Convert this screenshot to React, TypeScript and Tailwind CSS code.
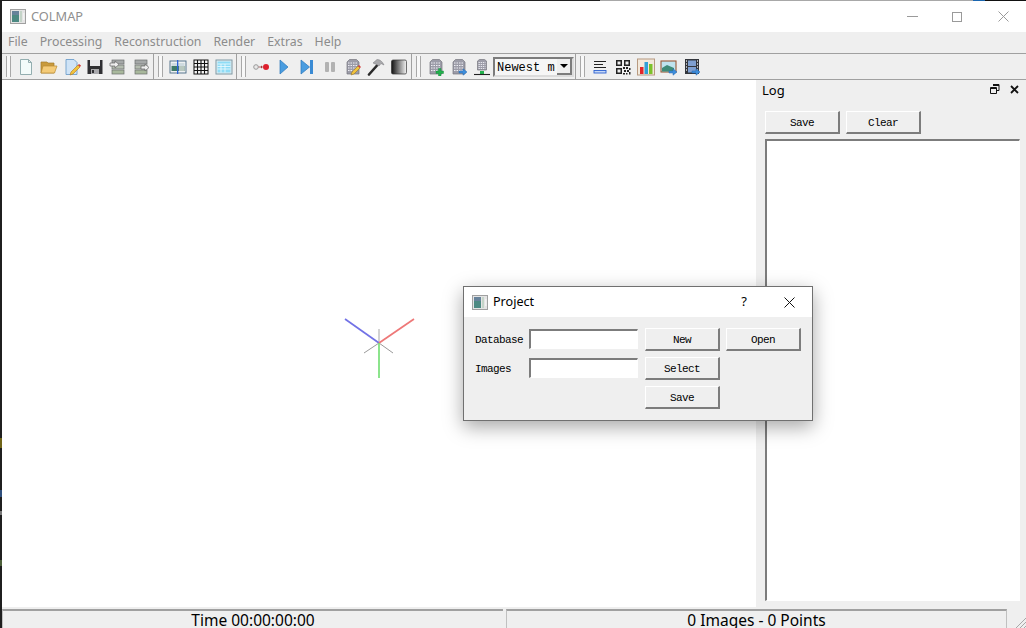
import { ReactNode } from "react";

const ui = "font-['Noto_Sans','Liberation_Sans',sans-serif]";
const mono = "font-['Liberation_Mono',monospace] text-[11px] tracking-[-0.6px]";

const Svg = ({ children, size = 18 }: { children: ReactNode; size?: number }) => (
  <svg width={size} height={size} viewBox="0 0 18 18" className="block">
    {children}
  </svg>
);

const Building = () => (
  <g>
    <path d="M3 4l2.500-2.500h7L15 4v12H3z" fill="#9c9ca8" stroke="#77777f" strokeWidth="0.7" />
    <path
      d="M4 5h10M4 7.500h10M4 10h10M4 12.500h10"
      stroke="#eeeef4"
      strokeWidth="1"
      strokeDasharray="1.500 1"
    />
  </g>
);

const BlueArrow = () => (
  <path d="M9 13h4v-2.200l4 3.200-4 3.200V15H9z" fill="#3f8fdc" stroke="#2267b0" strokeWidth="0.5" />
);

const Stack = ({ right }: { right?: boolean }) => (
  <g>
    <rect x="3" y="2" width="12" height="4" fill="#a5a8a8" stroke="#6b6e6e" strokeWidth="0.7" />
    <rect x="3" y="7" width="12" height="4" fill="#b4bcb0" stroke="#6b6e6e" strokeWidth="0.7" />
    <rect x="3" y="12" width="12" height="4" fill="#a8b89c" stroke="#6b6e6e" strokeWidth="0.7" />
    {right ? (
      <path d="M9 8h4V6l4 3.500L13 13v-2H9z" fill="#eee" stroke="#666" strokeWidth="0.7" />
    ) : (
      <path d="M1 5h5V3l4 3.500L6 10V8H1z" fill="#eee" stroke="#666" strokeWidth="0.7" />
    )}
  </g>
);

const icons: { [key: string]: ReactNode } = {
  newFile: (
    <path d="M3.500 1.500h8l3 3v12h-11z M11.500 1.500v3h3" fill="#f3fbfa" stroke="#88a6a8" strokeWidth="0.9" />
  ),
  open: (
    <g>
      <path d="M1 4h6l1 1h6v10H1z" fill="#c99a3c" stroke="#a57b2a" strokeWidth="0.7" />
      <path d="M1 15l2-7h14l-2.500 7z" fill="#f4cb78" stroke="#b98b32" strokeWidth="0.7" />
    </g>
  ),
  edit: (
    <g>
      <path d="M3 1.500h8l3 3v12H3z" fill="#cfe3f6" stroke="#6f9fcc" strokeWidth="0.9" />
      <path d="M8 14l7-7 2 2-7 7-3 1z" fill="#f1c33c" stroke="#b0761c" strokeWidth="0.6" />
      <path d="M15 7l2 2 1-1.500-2-1.500z" fill="#d63c3c" />
    </g>
  ),
  save: (
    <g>
      <path d="M1.500 2h15v14h-15z" fill="#2f2f33" />
      <rect x="4" y="2" width="10" height="6" fill="#e8e8ec" />
      <rect x="5" y="11" width="8" height="5" fill="#a8a8ac" />
      <rect x="6" y="12" width="2" height="3" fill="#2f2f33" />
    </g>
  ),
  dbIn: <Stack />,
  dbOut: <Stack right />,
  split: (
    <g>
      <rect x="1" y="3" width="16" height="12" fill="#eef1f2" stroke="#4a6a85" strokeWidth="0.9" />
      <rect x="2.500" y="5" width="13" height="3" fill="#cfdbe0" />
      <rect x="2.500" y="8" width="13" height="5" fill="#3f7a68" />
      <rect x="10" y="8" width="5.500" height="5" fill="#b9c8c0" />
      <rect x="8" y="2" width="1.300" height="14" fill="#2a62d8" />
    </g>
  ),
  grid: (
    <g>
      <rect x="2" y="2" width="14" height="14" fill="#f7f7f7" stroke="#111" />
      <path d="M5.500 2v14M9 2v14M12.500 2v14M2 5.500h14M2 9h14M2 12.500h14" stroke="#111" strokeWidth="1.100" />
    </g>
  ),
  table: (
    <g>
      <rect x="1" y="2" width="16" height="14" fill="#e2eef2" stroke="#7e9aa5" />
      <rect x="2.500" y="3.500" width="13" height="11" fill="#8fdcf6" />
      <path d="M2.500 6h13M2.500 8.500h13M2.500 11h13M6 6v8.500M10 6v8.500" stroke="#f0fbff" strokeWidth="0.8" />
    </g>
  ),
  step: (
    <g>
      <circle cx="4" cy="9" r="2.300" fill="#e8e8e8" stroke="#999" />
      <path d="M6.500 9h3" stroke="#aa6666" />
      <path d="M9 7.500l2 1.500-2 1.500z" fill="#aa3333" />
      <circle cx="14" cy="9" r="3" fill="#dd1f2c" />
    </g>
  ),
  play: <path d="M5 2l8 7-8 7z" fill="#4a9de0" stroke="#2a76ba" strokeWidth="0.7" />,
  next: (
    <g>
      <path d="M3 2l8.500 7L3 16z" fill="#4a9de0" stroke="#2a76ba" strokeWidth="0.7" />
      <rect x="12" y="2" width="3" height="14" fill="#3a8bd4" />
    </g>
  ),
  pause: (
    <g>
      <rect x="4" y="4" width="4" height="10" rx="1" fill="#b2b2b2" />
      <rect x="10" y="4" width="4" height="10" rx="1" fill="#b2b2b2" />
    </g>
  ),
  buildEdit: (
    <g>
      <Building />
      <path d="M8 14l6-6 2 2-6 6-3 1z" fill="#f1c33c" stroke="#8a6a20" strokeWidth="0.5" />
      <path d="M14 8l2 2 1-1-2-2z" fill="#d63c3c" />
    </g>
  ),
  hammer: (
    <g>
      <path d="M2 16.500l8-9" stroke="#2a2a2a" strokeWidth="2.600" strokeLinecap="round" />
      <path d="M6 5l4-3.500c3 0 5.500 2 7 5.500l-3-1.500-2 2.500-2.500-1.500z" fill="#a9a9ac" stroke="#77777a" strokeWidth="0.5" />
    </g>
  ),
  gradient: (
    <rect x="1.500" y="2" width="15" height="14" rx="1.500" fill="url(#shade)" stroke="#333" strokeWidth="0.7" />
  ),
  buildAdd: (
    <g>
      <Building />
      <path d="M11.500 10.500h2.500v2.500h2.500v2.500H14V18h-2.500v-2.500H9V13h2.500z" fill="#22b14c" stroke="#128038" strokeWidth="0.4" />
    </g>
  ),
  buildOut: (
    <g>
      <Building />
      <BlueArrow />
    </g>
  ),
  buildNet: (
    <g>
      <path d="M4.500 3l2-1.500h5l2 1.500v9h-9z" fill="#9c9ca8" stroke="#77777f" strokeWidth="0.7" />
      <path d="M5.500 4.500h7M5.500 6.500h7M5.500 8.500h7M5.500 10.500h7" stroke="#eeeef4" strokeWidth="0.9" strokeDasharray="1.400 0.800" />
      <rect x="7" y="13" width="4" height="3" fill="#22b14c" />
      <path d="M1 16.500h16" stroke="#222" strokeWidth="1.100" />
    </g>
  ),
  lines: (
    <g>
      <path d="M3 3.500h12M3 6.500h9M3 9.500h12" stroke="#222" strokeWidth="1.100" />
      <rect x="3" y="12.500" width="12" height="2.500" fill="#c6d8f5" stroke="#2a5fd0" strokeWidth="0.9" />
    </g>
  ),
  qr: (
    <g fill="#222">
      <path d="M2 2h6v6H2z M3.500 3.500v3h3v-3z" fillRule="evenodd" />
      <path d="M10 2h6v6h-6z M11.500 3.500v3h3v-3z" fillRule="evenodd" />
      <path d="M2 10h6v6H2z M3.500 11.500v3h3v-3z" fillRule="evenodd" />
      <path d="M9 9h2v2H9zM12 9h2v2h-2zM15 10h1.500v2H15zM10 12h2v2h-2zM13 12h2v2h-2zM9 15h2v1.500H9zM12 15h1.500v1.500H12zM15 14h1.500v2.500H15z" />
    </g>
  ),
  chart: (
    <g>
      <rect x="0.500" y="1" width="17" height="16" fill="#f2e9dc" stroke="#b89a80" />
      <rect x="3" y="9" width="3.500" height="7" fill="#e2252b" />
      <rect x="7.500" y="4" width="3.500" height="12" fill="#2f9fd8" />
      <rect x="12" y="6" width="3.500" height="10" fill="#7cc22a" />
    </g>
  ),
  picture: (
    <g>
      <rect x="1" y="3" width="15" height="11" fill="#bfe3ee" stroke="#9a5a38" strokeWidth="1.100" />
      <path d="M2 10l5-3 7 3v3.400H2z" fill="#3f8b78" />
      <BlueArrow />
    </g>
  ),
  film: (
    <g>
      <rect x="2" y="1" width="14" height="15" fill="#33363c" />
      <rect x="5" y="2.500" width="8" height="5.500" fill="#7f9fd0" />
      <rect x="5" y="9" width="8" height="5.500" fill="#7f9fd0" />
      <path d="M3 3h1M3 6h1M3 9h1M3 12h1M14 3h1M14 6h1M14 9h1M14 12h1" stroke="#ddd" strokeWidth="1.500" />
      <BlueArrow />
    </g>
  ),
};

const ToolIcon = ({ name }: { name: string }) => (
  <div className="flex w-[23px] shrink-0 items-center justify-center">
    <Svg>{icons[name]}</Svg>
  </div>
);

const ToolGroup = ({ names, end, last }: { names: string[]; end?: ReactNode; last?: boolean }) => (
  <div className={`flex h-full shrink-0 items-center pl-1 pr-px ${last ? "" : "border-r border-[#a0a0a0]"}`}>
    <div className="mr-[3px] h-[21px] w-[5px] shrink-0 border-x border-[#a8a8a8] bg-[#f8f8f8]" />
    {names.map((name) => (
      <ToolIcon key={name} name={name} />
    ))}
    {end}
  </div>
);

const AppIcon = () => (
  <svg width="16" height="15" viewBox="0 0 16 15" className="block shrink-0">
    <rect x="0.500" y="0.500" width="15" height="14" fill="#e4e4e4" stroke="#a0a0a0" />
    <rect x="2" y="2" width="7" height="11" fill="#4d8a83" />
    <rect x="2" y="2" width="7" height="4" fill="#67839b" />
    <rect x="10" y="2" width="2" height="11" fill="#c4d4c8" />
    <rect x="13" y="4" width="1.500" height="7" fill="#f2f2f2" />
  </svg>
);

const QtButton = ({ label }: { label: string }) => (
  <button
    className={`flex h-[23px] w-[75px] shrink-0 items-center justify-center border-b-2 border-l border-r-2 border-t border-b-[#7c7c7c] border-l-white border-r-[#7c7c7c] border-t-white bg-[#efefef] pt-[2px] text-black ${mono}`}
  >
    {label}
  </button>
);

const QtInput = () => (
  <div className="mt-px h-[20px] w-[109px] self-start border-b border-l-2 border-r border-t-2 border-b-white border-l-[#7c7c7c] border-r-white border-t-[#7c7c7c] bg-white" />
);

const menus = ["File", "Processing", "Reconstruction", "Render", "Extras", "Help"];

const stripeMarks = [
  { top: "mt-[438px]", color: "bg-[#6f6418]", h: "h-[10px]" },
  { top: "mt-[42px]", color: "bg-[#2f4f7c]", h: "h-[7px]" },
  { top: "mt-[14px]", color: "bg-[#777777]", h: "h-[4px]" },
  { top: "mt-[45px]", color: "bg-[#4c5f3a]", h: "h-[6px]" },
];

const App = () => {
  return (
    <div className={`relative flex h-[628px] w-[1026px] overflow-hidden bg-white text-black ${ui}`}>
      <svg width="0" height="0" className="absolute">
        <defs>
          <linearGradient id="shade" x1="0" x2="1" y1="0" y2="0">
            <stop offset="0" stopColor="#111" />
            <stop offset="1" stopColor="#f4f4f4" />
          </linearGradient>
        </defs>
      </svg>

      {/* bit of the desktop showing at the left edge */}
      <div className="flex w-[2px] shrink-0 flex-col bg-[#1f1f1f]">
        {stripeMarks.map((mark) => (
          <div key={mark.top} className={`${mark.top} ${mark.h} ${mark.color}`} />
        ))}
      </div>

      <div className="flex min-w-0 flex-1 flex-col">
        <div className="flex h-px shrink-0">
          <div className="w-[598px] bg-[#1f1f1f]" />
          <div className="w-[373px] bg-[#a8a8a8]" />
          <div className="w-[12px] bg-[#1a66b0]" />
          <div className="flex-1 bg-[#111]" />
        </div>

        {/* title bar */}
        <div className="flex h-[31px] shrink-0 items-center bg-white pl-[8px]">
          <AppIcon />
          <span className="ml-[5px] text-[12.800px] text-[#8f8f8f]">COLMAP</span>
          <div className="ml-auto flex items-center">
            <div className="h-px w-[11px] bg-[#9a9a9a]" />
            <div className="ml-[34px] h-[10px] w-[10px] border border-[#9a9a9a]" />
            <svg width="11" height="11" viewBox="0 0 11 11" className="ml-[36px] mr-[17px]">
              <path d="M0.500 0.500l10 10M10.500 0.500l-10 10" stroke="#9a9a9a" />
            </svg>
          </div>
        </div>

        {/* menu bar */}
        <div className="flex h-[21px] shrink-0 items-center gap-[12px] bg-[#efefef] pl-[6px] text-[12.300px] text-[#8c8c8c]">
          {menus.map((menu) => (
            <span key={menu}>{menu}</span>
          ))}
        </div>

        {/* tool bar */}
        <div className="flex h-[27px] shrink-0 items-center border-y border-[#a0a0a0] bg-[#efefef]">
          <ToolGroup names={["newFile", "open", "edit", "save", "dbIn", "dbOut"]} />
          <ToolGroup names={["split", "grid", "table"]} />
          <ToolGroup names={["step", "play", "next", "pause", "buildEdit", "hammer", "gradient"]} />
          <ToolGroup
            names={["buildAdd", "buildOut", "buildNet"]}
            end={
              <div className="flex h-[20px] w-[81px] shrink-0 items-center overflow-hidden border-2 border-b-[#dcdcdc] border-l-[#7c7c7c] border-r-[#dcdcdc] border-t-[#7c7c7c] bg-[#f6f6f6] pl-[2px]">
                <span className="w-[58px] overflow-hidden whitespace-nowrap pt-[2px] font-['Liberation_Mono',monospace] text-[12px] leading-none">
                  Newest model
                </span>
                <div className="ml-auto flex h-[16px] w-[15px] items-center justify-center border-b-2 border-r-2 border-b-[#7c7c7c] border-r-[#7c7c7c] bg-[#efefef]">
                  <div className="h-0 w-0 border-x-[4px] border-t-[4px] border-x-transparent border-t-black" />
                </div>
              </div>
            }
          />
          <ToolGroup names={["lines", "qr", "chart", "picture", "film"]} last />
        </div>

        <div className="flex min-h-0 flex-1">
          {/* 3d view */}
          <div className="min-w-0 flex-1 bg-white">
            <svg width="754" height="527" viewBox="2 80 754 527" className="block">
              <path d="M379 329v14" stroke="#c4c4c4" strokeWidth="1.500" />
              <path d="M379 343l-15 10M379 343l14 10" stroke="#9a9a9a" strokeWidth="1" />
              <path d="M379 343l-34-24" stroke="#7272e6" strokeWidth="1.700" />
              <path d="M379 343l35-24" stroke="#ee7878" strokeWidth="1.700" />
              <path d="M379 343v35" stroke="#78e078" strokeWidth="1.700" />
            </svg>
          </div>

          {/* log dock */}
          <div className="flex w-[270px] shrink-0 flex-col bg-[#efefef] pb-[6px] pl-[9px] pr-[6px]">
            <div className="-ml-[3px] flex h-[22px] items-center pb-px text-[13px]">
              <span className="text-black">Log</span>
              <div className="ml-auto -mt-[3px] flex items-center gap-[10px] pr-[1px]">
                <svg width="10" height="10" viewBox="0 0 10 10">
                  <path d="M3 .5h6v6H7M.5 3.500h6v6h-6zM.5 4.500h6M3 1.500h6" fill="none" stroke="#111" />
                </svg>
                <svg width="9" height="9" viewBox="0 0 9 9">
                  <path d="M1 1l7 7M8 1l-7 7" stroke="#111" strokeWidth="1.800" />
                </svg>
              </div>
            </div>
            <div className="mt-[9px] flex gap-[6px]">
              <QtButton label="Save" />
              <QtButton label="Clear" />
            </div>
            <div className="mt-[5px] min-h-0 flex-1 border-b border-l-2 border-r border-t-2 border-b-white border-l-[#7c7c7c] border-r-white border-t-[#7c7c7c] bg-white" />
          </div>
        </div>

        {/* status bar */}
        <div className="flex h-[21px] shrink-0 bg-[#efefef] pt-[2px] text-[15.500px] leading-[19px]">
          <div className="flex h-[24px] w-[501px] shrink-0 justify-center border-l border-t-2 border-[#a0a0a0] border-l-[#c0c0c0]">
            Time 00:00:00:00
          </div>
          <div className="ml-[3px] flex h-[24px] w-[501px] shrink-0 justify-center border-x border-t-2 border-[#a0a0a0] border-x-[#c0c0c0]">
            0 Images - 0 Points
          </div>
          <svg width="11" height="11" viewBox="0 0 11 11" className="ml-auto mt-[8px]">
            <path d="M11 1L1 11M11 5l-6 6M11 9l-2 2" stroke="#a8a8a8" />
          </svg>
        </div>
      </div>

      {/* project dialog */}
      <div className="absolute left-[463px] top-[286px] flex h-[135px] w-[350px] flex-col border border-[#707070] bg-[#efefef] shadow-[0_6px_18px_rgba(0,0,0,0.35)]">
        <div className="flex h-[30px] shrink-0 items-center bg-white pl-[8px]">
          <AppIcon />
          <span className="ml-[5px] text-[12.600px] text-black">Project</span>
          <span className="ml-auto text-[13px] text-black">?</span>
          <svg width="11" height="11" viewBox="0 0 11 11" className="ml-[37px] mr-[17px]">
            <path d="M0.500 0.500l10 10M10.500 0.500l-10 10" stroke="#111" />
          </svg>
        </div>
        <div className="grid grid-cols-[48px_110px_75px_75px] grid-rows-[23px_23px_23px] items-center gap-[6px] pl-[11px] pt-[11px]">
          <span className={`pt-[2px] ${mono}`}>Database</span>
          <QtInput />
          <QtButton label="New" />
          <QtButton label="Open" />
          <span className={`pt-[2px] ${mono}`}>Images</span>
          <QtInput />
          <QtButton label="Select" />
          <span />
          <span />
          <span />
          <QtButton label="Save" />
        </div>
      </div>
    </div>
  );
};

export default App;
